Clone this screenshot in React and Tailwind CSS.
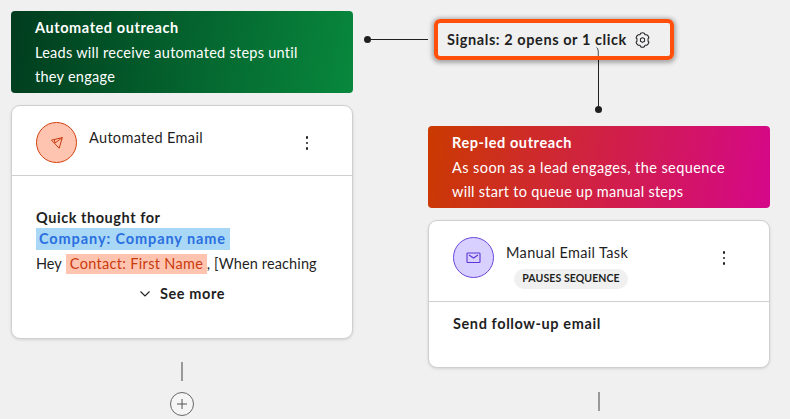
import React from "react";

function Dots() {
  return (
    <div className="flex flex-col gap-[3px]">
      <div className="w-[2.5px] h-[2.5px] rounded-full bg-[#1f1f1f]" />
      <div className="w-[2.5px] h-[2.5px] rounded-full bg-[#1f1f1f]" />
      <div className="w-[2.5px] h-[2.5px] rounded-full bg-[#1f1f1f]" />
    </div>
  );
}

function Banner({ title, lines, className }) {
  return (
    <div className={`h-[82px] rounded-[4px] pl-[24px] pt-[5px] text-white text-[14.5px] leading-[24px] tracking-[0.27px] ${className}`}>
      <div className="font-bold tracking-[0.58px] mb-px">{title}</div>
      {lines.map((line, i) => (
        <div key={i}>{line}</div>
      ))}
    </div>
  );
}

function PlaneIcon() {
  return (
    <svg width="14" height="14" viewBox="0 0 14 14" fill="none" stroke="#c93a0c" strokeWidth="1" strokeLinejoin="round">
      <path d="M1.5 4.2 L12.3 1.6 L9.2 12.2 Z" />
      <path d="M5 7 L12.3 1.6" />
      <path d="M5 7 L4.4 4" />
    </svg>
  );
}

function MailIcon() {
  return (
    <svg width="15" height="12" viewBox="0 0 15 12" fill="none" stroke="#5c34d6" strokeWidth="1.1">
      <rect x="1" y="1" width="13" height="9.5" rx="0.8" />
      <path d="M3 3 L7.5 6 L12 3" />
    </svg>
  );
}

function GearIcon() {
  return (
    <svg width="15" height="16" viewBox="1.5 0.5 13 15" fill="none" stroke="#26262b" strokeWidth="1" strokeLinejoin="round">
      <path d="M6.3 1.6 Q8 0.7 9.7 1.6 L10.4 3 L12 3 Q13.8 4 14 6 L13.1 7 Q13.4 8 13.1 9 L14 10 Q13.8 12 12 13 L10.4 13 L9.7 14.4 Q8 15.3 6.3 14.4 L5.6 13 L4 13 Q2.2 12 2 10 L2.9 9 Q2.6 8 2.9 7 L2 6 Q2.2 4 4 3 L5.6 3 Z" />
      <path d="M8 5.8 L9.9 6.9 L9.9 9.1 L8 10.2 L6.1 9.1 L6.1 6.9 Z" />
    </svg>
  );
}

function App() {
  return (
    <div className="w-[790px] h-[419px] overflow-hidden bg-[#f0f0f0] flex pl-[11px] pt-[11px] text-[#1f1f1f] font-['Lato','Noto_Sans',sans-serif]">

      {/* Left column */}
      <div className="w-[342px] shrink-0">
        <Banner
          title="Automated outreach"
          lines={["Leads will receive automated steps until", "they engage"]}
          className="bg-[linear-gradient(100deg,#003c1e,#08883d)]"
        />

        <div className="mt-[12px] h-[234px] bg-white border border-[#cfcfcf] rounded-[9px] shadow-[0_1px_3px_rgba(0,0,0,0.12)]">
          <div className="h-[70px] border-b border-[#cfcfcf] flex pl-[24px] pr-[44px] pt-[16px]">
            <div className="w-[41px] h-[41px] rounded-full bg-[#ffc4b0] border border-[#d2410f] flex items-center justify-center">
              <PlaneIcon />
            </div>
            <div className="ml-[12px] mt-[7px] text-[14.5px] leading-[18px] tracking-[0.33px]">Automated Email</div>
            <div className="ml-auto mt-[14px]"><Dots /></div>
          </div>

          <div className="pl-[24px] pt-[33px] text-[14.5px]">
            <div className="font-bold leading-[18px] tracking-[0.55px]">Quick thought for</div>
            <div className="mt-[1px] w-[194px] h-[22px] bg-[#a8d8f5] pl-[3px] font-bold leading-[22px] text-[#2a6fe0] tracking-[0.9px]">Company: Company name</div>
            <div className="mt-[4px] flex items-center h-[20px]">
              <span>Hey</span>
              <span className="ml-[4px] w-[141px] h-[20px] bg-[#ffc4b0] pl-[4px] leading-[20px] text-[#c93a0c] tracking-[0.32px]">Contact: First Name</span>
              <span className="tracking-[0.13px]">, [When reaching</span>
            </div>
            <div className="mt-[11px] flex items-center pl-[104px] font-bold tracking-[0.6px]">
              <svg width="10" height="6" viewBox="0 0 10 6" fill="none" stroke="#1f1f1f" strokeWidth="1.1">
                <path d="M0.5 0.5 L5 5 L9.5 0.5" />
              </svg>
              <span className="ml-[10px] leading-[18px]">See more</span>
            </div>
          </div>
        </div>

        <div className="flex flex-col items-center">
          <div className="mt-[23px] w-[2px] h-[19px] bg-[#999999]" />
          <div className="mt-[11px] w-[24px] h-[24px] rounded-full border border-[#666666] bg-[#f5f5f5] flex items-center justify-center">
            <svg width="12" height="12" viewBox="0 0 12 12" stroke="#555555" strokeWidth="1">
              <path d="M6 1 V11 M1 6 H11" />
            </svg>
          </div>
        </div>
      </div>

      {/* Link between the banner and the signals box */}
      <div className="w-[75px] shrink-0 pl-[11px] pt-[25px] flex items-start">
        <div className="w-[7px] h-[7px] rounded-full bg-[#1f1f1f] shrink-0" />
        <div className="mt-[3px] w-[57px] h-px bg-[#1f1f1f] shrink-0" />
      </div>

      {/* Right column */}
      <div className="w-[342px] shrink-0">
        <div className="relative ml-[6px] mt-[8px] w-[240px] h-[41px] border-[4px] border-[#ff4f0a] rounded-[6px] shadow-[0_1px_4px_2px_rgba(0,0,0,0.3)] flex items-center pl-[9px] text-[14.5px] font-bold tracking-[0.58px]">
          <span>Signals: 2 opens or 1 click</span>
          <span className="ml-[8px]"><GearIcon /></span>
          <svg className="absolute left-[158px] top-[24px]" width="4" height="9" viewBox="0 0 4 9" fill="none" stroke="#1f1f1f" strokeWidth="0.8">
            <path d="M0.5 0.5 Q2.3 1 2.3 5 V9" />
          </svg>
        </div>

        <div className="h-[66px] pl-[167px] flex flex-col items-start">
          <div className="ml-[3px] w-px h-[46px] bg-[#1f1f1f]" />
          <div className="w-[7px] h-[7px] rounded-full bg-[#1f1f1f]" />
        </div>

        <Banner
          title="Rep-led outreach"
          lines={[
            <span className="tracking-[0.43px]">As soon as a lead engages, the sequence</span>,
            "will start to queue up manual steps",
          ]}
          className="bg-[linear-gradient(100deg,#cb3a00,#d5078a)]"
        />

        <div className="mt-[12px] h-[148px] bg-white border border-[#cfcfcf] rounded-[9px] shadow-[0_1px_3px_rgba(0,0,0,0.12)]">
          <div className="h-[81px] border-b border-[#cfcfcf] flex pl-[24px] pr-[44px] pt-[16px]">
            <div className="w-[41px] h-[41px] rounded-full bg-[#d8d0ff] border border-[#6a45d8] flex items-center justify-center shrink-0">
              <MailIcon />
            </div>
            <div className="ml-[12px]">
              <div className="mt-[7px] text-[14.5px] leading-[18px] tracking-[0.35px]">Manual Email Task</div>
              <div className="ml-[8px] mt-[7px] w-[114px] h-[20px] rounded-full bg-[#f0f0f0] flex items-center justify-center text-[10.5px] font-bold tracking-[0.1px]">PAUSES SEQUENCE</div>
            </div>
            <div className="ml-auto mt-[14px]"><Dots /></div>
          </div>
          <div className="pl-[24px] pt-[13px] text-[14.5px] font-bold leading-[18px] tracking-[0.6px]">Send follow-up email</div>
        </div>

        <div className="mt-[24px] mx-auto w-[2px] h-[19px] bg-[#999999]" />
      </div>

    </div>
  );
}

export default App;
